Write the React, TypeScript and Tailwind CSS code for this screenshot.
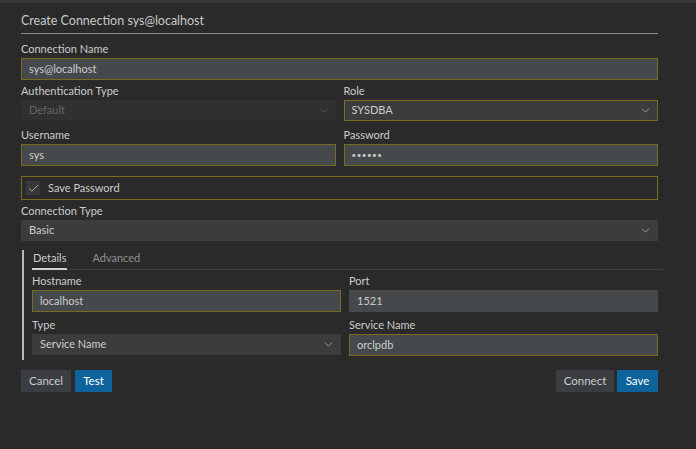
import { Check, ChevronDown } from 'lucide-react'

const FONT = { fontFamily: 'Lato, "Noto Sans", sans-serif' }

function Label({ children }: { children: React.ReactNode }) {
  return <div className="h-[14px] leading-[14px] text-[11px] text-[#cccccc] mb-[2px]">{children}</div>
}

function TextInput({ value, focused = true, small = false }: { value: string; focused?: boolean; small?: boolean }) {
  return (
    <div
      className={`h-[22px] flex items-center px-[7px] bg-[#45494b] border text-[#cccccc] ${
        small ? 'text-[8px] tracking-[0.5px]' : 'text-[11px]'
      } ${focused ? 'border-[#7d6a22]' : 'border-transparent'}`}
    >
      {value}
    </div>
  )
}

function Select({
  value,
  disabled = false,
  focused = false,
}: {
  value: string
  disabled?: boolean
  focused?: boolean
}) {
  return (
    <div
      className={`h-[21px] flex items-center justify-between pl-[7px] pr-[5px] border text-[11px] ${
        disabled ? 'bg-[#303030] text-[#666666]' : 'bg-[#3c3c3c] text-[#cccccc]'
      } ${focused ? 'border-[#7d6a22]' : 'border-transparent'}`}
    >
      <span>{value}</span>
      <ChevronDown size={13} strokeWidth={1.5} className={disabled ? 'text-[#555]' : 'text-[#aaaaaa]'} />
    </div>
  )
}

export default function App() {
  return (
    <div className="w-[696px] h-[449px] bg-[#2a2a2a] overflow-hidden" style={FONT}>
      <div className="h-[3px] bg-[#363636]" />
      <div className="pl-[21px] w-[658px]">
        <div className="pt-[8px] pb-[3px] border-b border-[#8a8a8a] text-[12.5px] leading-[19px] text-[#c8c8c8]">
          Create Connection sys@localhost
        </div>

        <div className="mt-[8px]">
          <Label>Connection Name</Label>
          <TextInput value="sys@localhost" />
        </div>

        <div className="mt-[4px] grid grid-cols-2 gap-x-[8px]">
          <div>
            <Label>Authentication Type</Label>
            <Select value="Default" disabled />
          </div>
          <div>
            <Label>Role</Label>
            <Select value="SYSDBA" focused />
          </div>
        </div>

        <div className="mt-[7px] grid grid-cols-2 gap-x-[8px]">
          <div>
            <Label>Username</Label>
            <TextInput value="sys" />
          </div>
          <div>
            <Label>Password</Label>
            <TextInput value="••••••" small />
          </div>
        </div>

        <div className="mt-[10px] h-[24px] flex items-center border border-[#7d6a22] pl-[4px] gap-[8px]">
          <div className="w-[14px] h-[14px] bg-[#383838] flex items-center justify-center">
            <Check size={13} strokeWidth={1.5} className="text-[#c8c8c8]" />
          </div>
          <span className="text-[11px] text-[#cccccc]">Save Password</span>
        </div>

        <div className="mt-[4px]">
          <Label>Connection Type</Label>
          <Select value="Basic" />
        </div>

        <div className="mt-[9px] ml-[1px] border-l-2 border-[#b8b8b8] pl-[8px] pb-[4px] w-[641px]">
          <div className="flex gap-[25px] border-b border-[#3d3d3d] text-[11px] leading-[16px]">
            <div className="pb-[2px] border-b-2 border-[#cfcfcf] text-[#cccccc] px-[1px] -mb-[1px]">Details</div>
            <div className="pb-[2px] text-[#8f8f8f]">Advanced</div>
          </div>
          <div className="mt-[4px] grid grid-cols-2 gap-x-[8px] w-[626px]">
            <div>
              <Label>Hostname</Label>
              <TextInput value="localhost" />
            </div>
            <div>
              <Label>Port</Label>
              <TextInput value="1521" focused={false} />
            </div>
          </div>
          <div className="mt-[6px] grid grid-cols-2 gap-x-[8px] w-[626px]">
            <div>
              <Label>Type</Label>
              <Select value="Service Name" />
            </div>
            <div>
              <Label>Service Name</Label>
              <TextInput value="orclpdb" />
            </div>
          </div>
        </div>

        <div className="mt-[10px] flex justify-between text-[11.5px]">
          <div className="flex gap-[4px]">
            <button className="h-[22px] w-[50px] bg-[#3a3d41] text-[#cccccc]">Cancel</button>
            <button className="h-[22px] w-[37px] bg-[#0e639c] text-[#ffffff]">Test</button>
          </div>
          <div className="flex gap-[3px]">
            <button className="h-[22px] w-[58px] bg-[#3a3d41] text-[#cccccc]">Connect</button>
            <button className="h-[22px] w-[41px] bg-[#0e639c] text-[#ffffff]">Save</button>
          </div>
        </div>
      </div>
    </div>
  )
}
